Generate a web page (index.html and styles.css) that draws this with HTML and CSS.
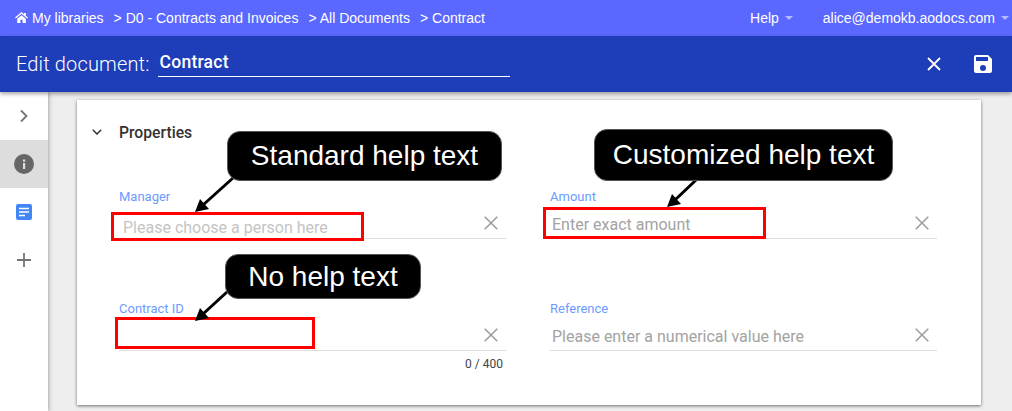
FILE: index.html
```html
<!DOCTYPE html>
<html lang="en">
<head>
<meta charset="utf-8">
<title>Edit document</title>
<link rel="stylesheet" href="styles.css">
</head>
<body>
<div class="page">
  <header class="topbar">
    <nav class="crumbs">
      <svg class="home" viewBox="0 0 24 20" width="13" height="11"><path fill="#fff" d="M12 0L0 10.200l1.500 1.800L12 3.200 22.500 12l1.500-1.800-4-3.400V1.500h-3.500v2.300zM4 12.500V20h6v-6h4v6h6v-7.500L12 5.700z"/></svg>
      <span class="crumb">My libraries</span>
      <span class="crumb">&gt; D0 - Contracts and Invoices</span>
      <span class="crumb">&gt; All Documents</span>
      <span class="crumb">&gt; Contract</span>
    </nav>
    <div class="menus">
      <span class="menu menu-help">Help<i class="caret"></i></span>
      <span class="menu">alice@demokb.aodocs.com<i class="caret"></i></span>
    </div>
  </header>
  <div class="editbar">
    <span class="edit-label">Edit document:</span>
    <span class="edit-title">Contract</span>
    <svg class="edit-close" viewBox="0 0 16 16" width="16" height="16"><path d="M2 2l12 12M14 2L2 14" stroke="#fff" stroke-width="1.800" fill="none"/></svg>
    <svg class="edit-save" viewBox="0 0 18 18" width="18" height="18"><path fill="#fff" fill-rule="evenodd" d="M2 0h12l4 4v12a2 2 0 0 1-2 2H2a2 2 0 0 1-2-2V2a2 2 0 0 1 2-2zm0 2v4h12V2zm7 8a3 3 0 1 0 0 6 3 3 0 0 0 0-6z"/></svg>
  </div>
  <div class="main">
    <aside class="side">
      <div class="side-item"><svg viewBox="0 0 10 14" width="10" height="14"><path d="M2 1.500L7.500 7 2 12.500" fill="none" stroke="#757575" stroke-width="1.800"/></svg></div>
      <div class="side-item side-active"><svg viewBox="0 0 20 20" width="20" height="20"><circle cx="10" cy="10" r="10" fill="#666"/><rect x="9" y="9" width="2.200" height="6" fill="#ddd"/><rect x="9" y="5.500" width="2.200" height="2.200" fill="#ddd"/></svg></div>
      <div class="side-item"><svg viewBox="0 0 16 16" width="16" height="16"><rect width="16" height="16" rx="2" fill="#4285f4"/><path d="M3 4.500h10M3 8h10M3 11.500h6" stroke="#fff" stroke-width="1.500"/></svg></div>
      <div class="side-item"><svg viewBox="0 0 14 14" width="14" height="14"><path d="M7 0v14M0 7h14" stroke="#757575" stroke-width="1.800"/></svg></div>
    </aside>
    <section class="content">
      <div class="card">
        <div class="card-head">
          <svg viewBox="0 0 10 6" width="10" height="6"><path d="M.8.8L5 5 9.200.8" fill="none" stroke="#333" stroke-width="1.500"/></svg>
          <h2 class="card-title">Properties</h2>
        </div>
        <div class="fields">
          <div class="field">
            <label class="field-label">Manager</label>
            <div class="field-line"><span class="ph ph-picker">Please choose a person here</span><svg class="clear" viewBox="0 0 14 14" width="14" height="14"><path d="M.7.7l12.600 12.600M13.300.7L.7 13.300" stroke="#9e9e9e" stroke-width="1.600"/></svg></div>
          </div>
          <div class="field">
            <label class="field-label">Amount</label>
            <div class="field-line"><span class="ph ph-dark">Enter exact amount</span><svg class="clear" viewBox="0 0 14 14" width="14" height="14"><path d="M.7.7l12.600 12.600M13.300.7L.7 13.300" stroke="#9e9e9e" stroke-width="1.600"/></svg></div>
          </div>
          <div class="field">
            <label class="field-label">Contract ID</label>
            <div class="field-line"><span class="ph">&nbsp;</span><svg class="clear" viewBox="0 0 14 14" width="14" height="14"><path d="M.7.7l12.600 12.600M13.300.7L.7 13.300" stroke="#9e9e9e" stroke-width="1.600"/></svg></div>
            <div class="counter">0 / 400</div>
          </div>
          <div class="field">
            <label class="field-label">Reference</label>
            <div class="field-line"><span class="ph ph-dark">Please enter a numerical value here</span><svg class="clear" viewBox="0 0 14 14" width="14" height="14"><path d="M.7.7l12.600 12.600M13.300.7L.7 13.300" stroke="#9e9e9e" stroke-width="1.600"/></svg></div>
          </div>
        </div>
      </div>
    </section>
  </div>
  <div class="redbox red-manager"></div>
  <div class="redbox red-amount"></div>
  <div class="redbox red-contract"></div>
  <svg class="arrows" viewBox="0 0 1012 411" width="1012" height="411">
    <g stroke="#000" stroke-width="3" fill="#000">
      <path d="M233 178L203 205" fill="none"/><path stroke="none" d="M195 212l5-13 9 10z"/>
      <path d="M696 180L675 200" fill="none"/><path stroke="none" d="M667 207l5-13 9 10z"/>
      <path d="M227 292L203 314" fill="none"/><path stroke="none" d="M195 321l5-13 9 10z"/>
    </g>
  </svg>
  <div class="note note-standard">Standard help text</div>
  <div class="note note-custom">Customized help text</div>
  <div class="note note-none">No help text</div>
</div>
</body>
</html>
```
FILE: styles.css
```css
* { box-sizing: border-box; }
html, body { margin: 0; padding: 0; }
body { width: 1012px; height: 411px; overflow: hidden; font-family: "Liberation Sans", Arial, sans-serif; }
.page { position: relative; width: 1012px; height: 411px; overflow: hidden; background: #eee; display: flex; flex-direction: column; }

.topbar { height: 36px; flex: none; background: #5a68ff; color: #fff; display: flex; align-items: center; justify-content: space-between; font-size: 14px; padding: 0 3px 1px 15px; }
.crumbs { display: flex; align-items: center; }
.home { margin-right: 4px; margin-top: -1px; }
.crumb { margin-right: 10px; }
.menus { display: flex; align-items: center; }
.menu { display: flex; align-items: center; }
.menu-help { margin-right: 30px; }
.caret { display: block; width: 0; height: 0; margin-left: 6px; border: 4px solid transparent; border-top-color: #b4baff; border-bottom-width: 0; }

.editbar { height: 56px; flex: none; background: #1e3db8; color: #fff; display: flex; align-items: center; padding: 0 20px 0 16px; position: relative; z-index: 2; box-shadow: 0 2px 4px rgba(0,0,0,.35); }
.edit-label { font-family: Roboto, sans-serif; font-size: 20px; letter-spacing: .15px; margin-right: 8px; font-weight: 300; }
.edit-title { width: 352px; height: 30px; margin-top: -5px; border-bottom: 1px solid #fff; font-family: Roboto, sans-serif; font-size: 17.500px; font-weight: 500; padding: 5px 0 0 2px; letter-spacing: .25px; }
.edit-close { margin-left: auto; margin-right: 32px; }

.main { flex: 1; display: flex; min-height: 0; }
.side { width: 48px; flex: none; background: #fff; box-shadow: 1px 0 4px rgba(0,0,0,.3); display: flex; flex-direction: column; }
.side-item { height: 48px; display: flex; align-items: center; justify-content: center; }
.side-active { background: #ddd; }

.content { flex: 1; padding: 8px 31px 6px 29px; }
.card { height: 305px; background: #fff; box-shadow: 0 1px 3px rgba(0,0,0,.55); padding: 23px 44px 0 15px; }
.card-head { display: flex; align-items: center; height: 18px; }
.card-title { margin: 0 0 0 17px; font-family: Roboto, sans-serif; font-size: 15.700px; font-weight: 500; color: #333; }
.fields { display: grid; grid-template-columns: 387px 387px; column-gap: 44px; margin: 49px 0 0 27px; grid-auto-rows: 112px; }
.field-label { display: block; font-family: Roboto, sans-serif; font-size: 13px; color: #6b9bff; line-height: 14px; }
.field-line { height: 35px; border-bottom: 1px solid #ddd; display: flex; align-items: center; justify-content: space-between; padding: 6px 8px 0 2px; }
.ph { font-family: Roboto, sans-serif; font-size: 16px; line-height: 19px; color: #c4c4c4; }
.ph-dark { color: #a3a3a3; }
.ph-picker { margin: 6px 0 0 2px; }
.clear { margin-top: -3px; }
.counter { font-family: Roboto, sans-serif; font-size: 12px; color: #444; text-align: right; padding: 6px 3px 0 0; }

.arrows { position: absolute; left: 0; top: 0; pointer-events: none; }
.redbox { position: absolute; border: 3px solid #f00; }
.red-manager { left: 111px; top: 212px; width: 253px; height: 29px; }
.red-amount { left: 543px; top: 207px; width: 223px; height: 32px; }
.red-contract { left: 115px; top: 317px; width: 200px; height: 32px; }

.note { position: absolute; background: #000; color: #fff; border-radius: 13px; font-size: 28px; display: flex; align-items: center; justify-content: center; border: 1px solid #555; }
.note-standard { left: 227px; top: 131px; width: 275px; height: 50px; }
.note-custom { left: 594px; top: 129px; width: 299px; height: 52px; }
.note-none { left: 225px; top: 254px; width: 196px; height: 45px; }
```
